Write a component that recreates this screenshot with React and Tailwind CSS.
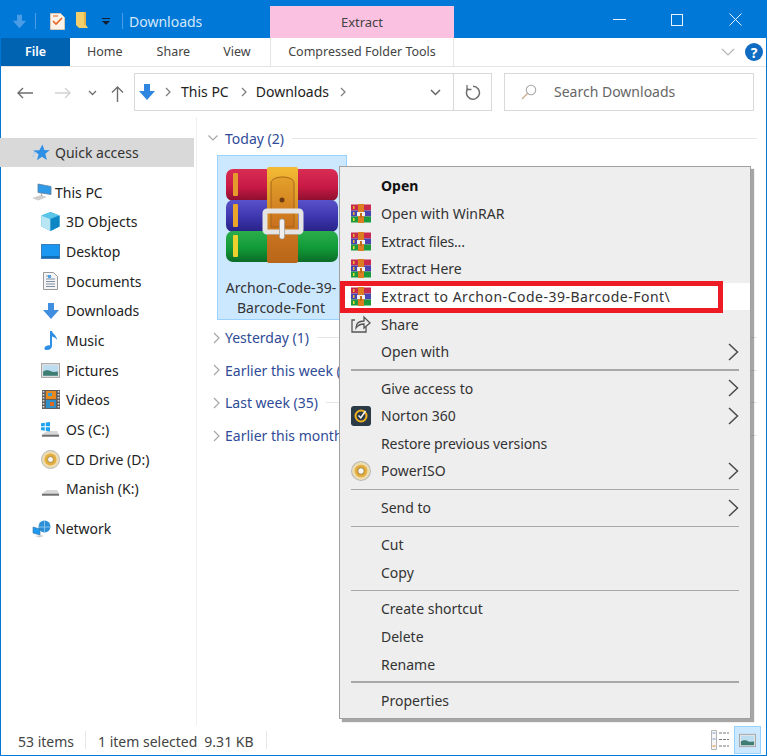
import React from "react";

const Chev = ({ className = "", d = "M1 1l4 4-4 4", w = 6, h = 10, vb = "0 0 6 10", stroke = "#808080", sw = 1.3 }) => (
  <svg width={w} height={h} viewBox={vb} fill="none" className={className}><path d={d} stroke={stroke} strokeWidth={sw} /></svg>
);

const BlueArrow = ({ size = 18, fill = "#3f8ee0" }) => (
  <svg width={size} height={size} viewBox="0 0 18 18"><path d="M6 1h6v7h5l-8 9-8-9h5z" fill={fill} /></svg>
);

const Star = () => (
  <svg width="18" height="18" viewBox="0 0 18 18"><path d="M10.5 0.5l1.8 5.5 5.4.3-4.4 3.5 1.6 6.2-5-3.3-5 3.6 1.7-6L1 6.6l6.3-.3z" fill="#2f8fe6" /><path d="M1 9h4M0 12h3" stroke="#a9cdf0" strokeWidth="1" /></svg>
);
const PC = () => (
  <svg width="20" height="18" viewBox="0 0 20 18"><path d="M6 1l13 2.500v8L6 9.500z" fill="#2f9ae8" stroke="#5b7f9f" strokeWidth=".8" /><path d="M0 15l9-3 6 2-9 3.500z" fill="#cfcfcf" /><path d="M9 10l1 3" stroke="#aaa" /></svg>
);
const Cube = () => (
  <svg width="19" height="19" viewBox="0 0 19 19"><path d="M9.5 0l9 3.5v11l-9 4.5-9-4.5v-11z" fill="#27a6dc" /><path d="M.5 3.5l9 3.5v12l-9-4.5z" fill="#b9e6f5" /><path d="M9.5 0l9 3.5-9 3.5-9-3.5z" fill="#5cc5ea" /><path d="M9.5 7v12l9-4.5v-11z" fill="#0f86c4" /></svg>
);
const Desk = () => (
  <svg width="19" height="16" viewBox="0 0 19 16"><rect x=".5" y=".5" width="18" height="14" fill="#1a97f0" stroke="#3a7db8" /><rect x="1" y="12" width="17" height="2" fill="#0f6fb8" /></svg>
);
const Doc = () => (
  <svg width="15" height="18" viewBox="0 0 15 18"><path d="M.5.5h10l4 4v13H.5z" fill="#f4f4f4" stroke="#9a9a9a" /><path d="M3 4h5M3 7h9M3 9.5h9M3 12h9M3 14.5h9" stroke="#7f8fa5" strokeWidth="1" /><path d="M5 3h3v3H5z" fill="#4ea1e6" /></svg>
);
const Note = () => (
  <svg width="14" height="19" viewBox="0 0 14 19"><path d="M6 0h2c.3 3 5 4 5 9-1-2-3-3-5-3.500V15c0 2-2 4-5 4s-3-2-2-3 3-2 5-1.500z" fill="#2f8fe6" /></svg>
);
const Pics = ({ w = 19, h = 15 }) => (
  <svg width={w} height={h} viewBox="0 0 18 14"><rect x=".5" y=".5" width="17" height="13" fill="#e8e8e8" stroke="#a5a5a5" /><rect x="2" y="2" width="14" height="10" fill="#bcdcf0" /><path d="M2 8c3-2 6-1 8 0s4 0 6 0v4H2z" fill="#3f7c72" /></svg>
);
const Film = () => (
  <svg width="18" height="19" viewBox="0 0 18 19"><rect width="18" height="19" fill="#5f5f5f" /><path d="M1.500 1v17M16.500 1v17" stroke="#d9d9d9" strokeWidth="1.600" strokeDasharray="1.500 1.500" /><rect x="4" y="1" width="10" height="8" fill="#e8891d" /><rect x="4" y="10" width="10" height="8" fill="#2f8fc9" /><rect x="6" y="3" width="4" height="3" fill="#3a9fd6" /><rect x="8" y="12" width="4" height="4" fill="#e06a1f" /></svg>
);
const Drive = ({ win }) => (
  <svg width="20" height="18" viewBox="0 0 20 18">
    <path d="M1 14l5-4h11l2 4v2H1z" fill="#d8d8d8" /><path d="M1 14h18v2H1z" fill="#6f6f6f" />
    {win && <path d="M0 2l4-.7V5H0zM5 1.200L9.500.5v4.500H5zM0 6h4v3.700L0 9zM5 6h4.500v4.500L5 9.800z" fill="#1fa2ee" />}
  </svg>
);
const Disc = ({ size = 19 }) => (
  <svg width={size} height={size} viewBox="0 0 19 19"><circle cx="9.500" cy="9.500" r="9" fill="#ecdcb0" stroke="#b9b9b9" /><circle cx="9.500" cy="9.500" r="6" fill="#e4ad3c" /><circle cx="9.500" cy="9.500" r="3" fill="#f6f6f6" stroke="#a88b45" /></svg>
);
const Net = () => (
  <svg width="20" height="18" viewBox="0 0 20 18"><circle cx="12.500" cy="6.500" r="6" fill="#2f8fd6" /><path d="M7 7h12M12.500 1v11" stroke="#9ad0f2" strokeWidth=".8" /><path d="M1 7l7 2v6l-7-2z" fill="#1d9bf0" stroke="#3d6f9a" strokeWidth=".6" /><path d="M3 16l6-1 3 1-5 1.500z" fill="#cfcfcf" /></svg>
);

const SmallRar = () => (
  <svg width="20" height="19" viewBox="0 0 20 19">
    <rect y=".5" width="20" height="6" fill="#c9294d" /><rect y="6.500" width="20" height="6" fill="#4a44b0" /><rect y="12.500" width="20" height="6" fill="#1c9a3c" />
    <rect x="7" width="6" height="19" fill="#dd7d22" /><rect x="6" y="8" width="8" height="4" fill="#f0f0f0" /><rect x="9" y="9" width="2" height="5" fill="#c06a1c" />
    <rect x="2" y="2" width="1.500" height="3" fill="#e9b52d" /><rect x="2" y="8" width="1.500" height="3" fill="#e9b52d" /><rect x="2" y="14" width="1.500" height="3" fill="#e9e02d" />
  </svg>
);

const ShareIco = () => (
  <svg width="20" height="18" viewBox="0 0 20 18" fill="none" stroke="#555" strokeWidth="1.300"><path d="M4 5H1v12h14v-5" /><path d="M5 13c0-5 3-7 8-7V2l6 6-6 5V9c-4 0-6 1-8 4z" fill="#eee" /></svg>
);
const Norton = () => (
  <svg width="20" height="20" viewBox="0 0 20 20"><rect width="20" height="20" rx="3" fill="#2b3a47" /><circle cx="10" cy="10" r="5.500" fill="none" stroke="#f1b21f" strokeWidth="2" /><path d="M7.500 9.500l2.300 2.300L14.500 5" fill="none" stroke="#f5f5f5" strokeWidth="1.500" /></svg>
);

const BigRar = () => (
  <svg width="112" height="96" viewBox="0 0 112 96">
    <defs>
      <linearGradient id="rr" x1="0" y1="0" x2="0" y2="1"><stop offset="0" stopColor="#d92d55" /><stop offset=".55" stopColor="#c81a45" /><stop offset="1" stopColor="#8c0f2e" /></linearGradient>
      <linearGradient id="bb" x1="0" y1="0" x2="0" y2="1"><stop offset="0" stopColor="#5a52c9" /><stop offset=".55" stopColor="#3c35ad" /><stop offset="1" stopColor="#272285" /></linearGradient>
      <linearGradient id="gg" x1="0" y1="0" x2="0" y2="1"><stop offset="0" stopColor="#2bae4b" /><stop offset=".55" stopColor="#119a38" /><stop offset="1" stopColor="#0b6c27" /></linearGradient>
      <linearGradient id="bt" x1="0" y1="0" x2="0" y2="1"><stop offset="0" stopColor="#f3bb35" /><stop offset=".35" stopColor="#dd9a27" /><stop offset=".7" stopColor="#c9741f" /><stop offset="1" stopColor="#b8651a" /></linearGradient>
      <linearGradient id="tg" x1="0" y1="0" x2="0" y2="1"><stop offset="0" stopColor="#e3a02a" /><stop offset="1" stopColor="#c9701e" /></linearGradient>
    </defs>
    <rect x="0" y="2" width="112" height="32" rx="7" fill="url(#rr)" />
    <rect x="0" y="33" width="112" height="32" rx="7" fill="url(#bb)" />
    <rect x="0" y="64" width="112" height="31" rx="7" fill="url(#gg)" />
    <rect x="7" y="6" width="5" height="23" rx="1" fill="#e49a2c" />
    <rect x="7" y="37" width="5" height="23" rx="1" fill="#e9a62a" />
    <rect x="7" y="68" width="5" height="22" rx="1" fill="#ecd02e" />
    <rect x="41" y="0" width="31" height="96" rx="2" fill="url(#bt)" />
    <path d="M45 60V16c0-8 23-8 23 0v44z" fill="url(#tg)" stroke="#a8631a" strokeWidth="1" />
    <rect x="41" y="66" width="31" height="2" fill="#9c5614" />
    <circle cx="56" cy="33" r="2.500" fill="#6e3c10" />
    <rect x="39" y="44" width="36" height="21" rx="2" fill="none" stroke="#e4e4e4" strokeWidth="5" />
    <rect x="53.500" y="52" width="5" height="20" rx="2" fill="#f0f0f0" stroke="#999" strokeWidth=".7" />
  </svg>
);

const SideRow = ({ icon, label, child }) => (
  <div className={`flex h-[29.67px] items-center ${child ? "pl-[41px]" : "pl-[32px]"}`}>
    <span className={`flex shrink-0 items-center justify-center ${child ? "mr-[6px] w-[19px]" : "mr-[3px] w-[20px]"}`}>{icon}</span>
    <span>{label}</span>
  </div>
);

const Group = ({ label, mt = "", open }) => (
  <div className={`flex h-5 items-center pr-[9px] text-[#2f4b97] ${mt}`}>
    {open ? (
      <Chev className="ml-[11px] mr-[7px] shrink-0" w={10} h={6} vb="0 0 10 6" d="M.500.500L5 5l4.500-4.500" stroke="#a6a6a6" sw={1.200} />
    ) : (
      <Chev className="ml-[16px] mr-[5px] shrink-0" w={7} h={12} vb="0 0 7 12" d="M1 1l5 5-5 5" stroke="#a6a6a6" sw={1.200} />
    )}
    <span className="shrink-0">{label}</span>
    <span className="ml-2 h-px flex-1 bg-[#e6e6e6]" />
  </div>
);

const Item = ({ icon, label, arrow, bold, children, white, labelClass = "" }) => (
  <div className={`relative flex h-[27.67px] items-center pl-[11px] pr-[11px] ${white ? "bg-white" : ""} ${bold ? "font-bold text-[#111]" : "text-[#333]"}`}>
    <span className="flex w-[20px] shrink-0 items-center justify-center">{icon}</span>
    <span className={`ml-[10px] flex-1 whitespace-nowrap ${labelClass}`}>{label}</span>
    {arrow && (
      <svg width="11" height="18" viewBox="0 0 11 18" fill="none"><path d="M1 1l8.500 8L1 17" stroke="#4a4a4a" strokeWidth="1.500" /></svg>
    )}
    {children}
  </div>
);
const Sep = ({ tall }) => (
  <div className={`flex items-center px-[11px] ${tall ? "h-[9.300px]" : "h-[8.600px]"}`}><div className="h-[1.500px] w-full bg-[#a8a8a8]" /></div>
);

export default function App() {
  return (
    <div className="relative h-[756px] w-[768px] overflow-hidden bg-white font-['Noto_Sans',sans-serif] text-[14px] text-[#333]">
      <div className="flex h-full w-[767px] flex-col border-x border-b border-[#0078d7]">
        {/* title bar */}
        <div className="flex h-[38px] shrink-0 items-center bg-[#0078d7] pl-[11px] pt-[4px]">
          <BlueArrow size={15} fill="#4a9ce6" />
          <span className="ml-[8px] h-[16px] w-px bg-[#4a9ce6]" />
          <svg className="ml-[14px]" width="15" height="17" viewBox="0 0 15 17"><path d="M.5.5h10l4 4v12H.5z" fill="#fbf3ea" stroke="#d9c9b5" /><path d="M3 8l3 3 6-6" fill="none" stroke="#e8641f" strokeWidth="1.600" /><path d="M3 3h5" stroke="#e8641f" /></svg>
          <svg className="ml-[11px]" width="13" height="18" viewBox="0 0 13 18"><path d="M0 0h10v13l2 3H3l-3-3z" fill="#f2cf6b" /><path d="M8 0h2v13H8z" fill="#e3b347" /></svg>
          <svg className="ml-[13px]" width="8" height="7" viewBox="0 0 8 7"><path d="M0 0h8v1H0zM0 3h8L4 7z" fill="#10202e" /></svg>
          <span className="ml-[12px] h-[16px] w-px bg-[#4a9ce6]" />
          <span className="ml-[6px] w-[141px] text-[14px] text-[#d3e8fa]">Downloads</span>
          <div className="flex h-[32px] w-[184px] items-center justify-center self-end bg-[#fbc1e0] pt-[2px] text-[13px] text-[#444]">Extract</div>
          <div className="-mt-[3px] ml-[159px] flex items-center">
            <span className="h-px w-[13px] bg-[#e8f3fc]" />
            <span className="ml-[45px] h-[12px] w-[12px] border border-[#e8f3fc]" />
            <svg className="ml-[46px]" width="13" height="13" viewBox="0 0 13 13"><path d="M.5.5l12 12M12.500.5l-12 12" stroke="#e8f3fc" strokeWidth="1" /></svg>
          </div>
        </div>
        {/* ribbon tabs */}
        <div className="flex h-[29px] shrink-0 items-stretch border-b border-[#e5e5e5] text-[12.500px] text-[#444]">
          <div className="flex w-[69px] items-center justify-center bg-[#0063b1] font-semibold text-white">File</div>
          <div className="flex w-[200px] items-center">
            <span className="ml-[17px]">Home</span>
            <span className="ml-[34px]">Share</span>
            <span className="ml-[33px]">View</span>
          </div>
          <div className="flex w-[184px] items-center justify-center border-x border-[#e5e5e5]">Compressed Folder Tools</div>
          <div className="flex flex-1 items-center justify-end pr-[3px]">
            <svg width="14" height="8" viewBox="0 0 14 8" fill="none"><path d="M1 1l6 6 6-6" stroke="#b5b5b5" strokeWidth="1.200" /></svg>
            <span className="ml-[10px] flex h-[18px] w-[18px] items-center justify-center rounded-full bg-[#0f6cc2] text-[14px] font-bold text-white">?</span>
          </div>
        </div>
        {/* nav */}
        <div className="flex h-[50px] shrink-0 items-center py-[1px]">
          <div className="flex w-[133px] items-center pt-px">
            <svg className="ml-[16px]" width="16" height="12" viewBox="0 0 16 12" fill="none"><path d="M16 6H1M6 1L1 6l5 5" stroke="#6e6e6e" strokeWidth="1.400" /></svg>
            <svg className="ml-[22px]" width="16" height="12" viewBox="0 0 16 12" fill="none"><path d="M0 6h15M10 1l5 5-5 5" stroke="#d2d2d2" strokeWidth="1.400" /></svg>
            <svg className="ml-[17px]" width="9" height="6" viewBox="0 0 9 6" fill="none"><path d="M1 1l3.500 3.500L8 1" stroke="#6e6e6e" strokeWidth="1.300" /></svg>
            <svg className="ml-[14px] mt-[2px]" width="13" height="16" viewBox="0 0 13 16" fill="none"><path d="M6.500 16V1M1 6.500L6.500 1 12 6.500" stroke="#6e6e6e" strokeWidth="1.400" /></svg>
          </div>
          <div className="flex h-[38px] w-[358px] items-center border border-[#d9d9d9] pl-[3px]">
            <BlueArrow size={18} fill="#2f86e0" />
            <Chev className="ml-[9px]" />
            <span className="-mt-[2px] ml-[10px] text-[14px] text-[#222]">This PC</span>
            <Chev className="ml-[12px]" />
            <span className="-mt-[2px] ml-[9px] text-[14px] text-[#222]">Downloads</span>
            <Chev className="ml-[11px]" />
            <div className="ml-auto flex h-full items-center">
              <svg className="mr-[12px]" width="11" height="7" viewBox="0 0 11 7" fill="none"><path d="M1 1l4.500 4.500L10 1" stroke="#666" strokeWidth="1.500" /></svg>
              <div className="flex h-full w-[38px] items-center justify-center border-l border-[#d9d9d9]">
                <svg width="16" height="16" viewBox="0 0 16 16" fill="none"><path d="M3 4.500A6.500 6.500 0 1 0 8 2.200" stroke="#6e6e6e" strokeWidth="1.500" /><path d="M2 1v4.500h4.500" stroke="#6e6e6e" strokeWidth="1.300" /></svg>
              </div>
            </div>
          </div>
          <div className="ml-[12px] flex h-[38px] w-[250px] items-center border border-[#d9d9d9] pb-[1px] pl-[16px] text-[#666]">
            <svg width="16" height="16" viewBox="0 0 16 16" fill="none"><circle cx="10" cy="6" r="4.700" stroke="#a8a8a8" strokeWidth="1.100" /><path d="M6.500 9.500L1 15" stroke="#c9a98a" strokeWidth="1.300" /></svg>
            <span className="ml-[17px] text-[14px]">Search Downloads</span>
          </div>
        </div>
        {/* main */}
        <div className="flex min-h-0 flex-1">
          <nav className="w-[196px] shrink-0 border-r border-[#f0f0f0] pt-[21px] text-[#222]">
            <div className="-ml-px flex h-[29px] w-[194px] items-center bg-[#d9d9d9] pl-[31px]">
              <span className="mr-[4px] flex w-[20px] justify-center"><Star /></span>
              <span className="text-[#333]">Quick access</span>
            </div>
            <div className="-ml-px mt-[10.500px]">
              <SideRow icon={<PC />} label="This PC" />
              <SideRow child icon={<Cube />} label="3D Objects" />
              <SideRow child icon={<Desk />} label="Desktop" />
              <SideRow child icon={<Doc />} label="Documents" />
              <SideRow child icon={<BlueArrow size={18} />} label="Downloads" />
              <SideRow child icon={<Note />} label="Music" />
              <SideRow child icon={<Pics />} label="Pictures" />
              <SideRow child icon={<Film />} label="Videos" />
              <SideRow child icon={<Drive win />} label="OS (C:)" />
              <SideRow child icon={<Disc />} label="CD Drive (D:)" />
              <SideRow child icon={<Drive />} label="Manish (K:)" />
            </div>
            <div className="-ml-px mt-[10px]">
              <SideRow icon={<Net />} label="Network" />
            </div>
          </nav>
          <main className="flex-1 pt-[11px]">
            <Group label="Today (2)" open />
            <div className="ml-[20px] mt-[7px] flex h-[165px] w-[130px] flex-col items-center border border-[#99d1ff] bg-[#cce8ff] pt-[11px] text-center leading-[20px]">
              <BigRar />
              <div className="mt-[15px] w-[126px] -translate-x-px">Archon-Code-39-<br />Barcode-Font</div>
            </div>
            <Group label="Yesterday (1)" mt="mt-[7.500px]" />
            <Group label="Earlier this week (6)" mt="mt-[12.700px]" />
            <Group label="Last week (35)" mt="mt-[12.700px]" />
            <Group label="Earlier this month (7)" mt="mt-[12.700px]" />
          </main>
        </div>
        {/* status */}
        <div className="flex h-[30px] shrink-0 items-center text-[14px] text-[#444]">
          <span className="ml-[17px] pt-[3px]">53 items</span>
          <span className="ml-[11px] h-[18px] w-px bg-[#e8e8e8]" />
          <span className="ml-[12px] pt-[3px]">1 item selected</span>
          <span className="ml-[7px] pt-[3px]">9.31 KB</span>
          <span className="ml-[12px] h-[18px] w-px bg-[#e8e8e8]" />
          <div className="ml-auto flex items-center pr-[5px]">
            <svg width="19" height="20" viewBox="0 0 19 20" fill="none"><path d="M.5.500h5v19h-5z" fill="#f6f6f6" stroke="#b5b5b5" /><path d="M1.500 3h3M1.500 9h3" stroke="#7a9cc0" /><path d="M1.500 16h3" stroke="#e08a2c" /><path d="M8 3h10M8 9.500h10M8 16h10" stroke="#777" strokeDasharray="3 1" /></svg>
            <span className="ml-[4px] flex h-[28px] w-[27px] items-center justify-center border border-[#99d1ff] bg-[#cce8ff]"><Pics w={17} h={15} /></span>
          </div>
        </div>
      </div>

      {/* context menu */}
      <div className="absolute left-[339px] top-[166px] w-[412px] border border-[#a0a0a0] bg-[#eeeeee] pb-[4px] pt-[5px] shadow-[3px_3px_1px_rgba(0,0,0,0.35)]">
        <Item label="Open" bold />
        <Item icon={<SmallRar />} label="Open with WinRAR" />
        <Item icon={<SmallRar />} label="Extract files..." labelClass="tracking-[-0.2px]" />
        <Item icon={<SmallRar />} label="Extract Here" />
        <Item icon={<SmallRar />} label="Extract to Archon-Code-39-Barcode-Font\" labelClass="tracking-[0.5px]" white>
          <span className="absolute -top-[2px] left-0 h-[32px] w-[383px] border-[5px] border-[#ed1c24]" />
        </Item>
        <Item icon={<ShareIco />} label="Share" />
        <Item label="Open with" arrow />
        <Sep />
        <Item label="Give access to" arrow />
        <Item icon={<Norton />} label="Norton 360" arrow />
        <Item label="Restore previous versions" labelClass="tracking-[-0.1px]" />
        <Item icon={<Disc size={20} />} label="PowerISO" arrow />
        <Sep tall />
        <Item label="Send to" arrow />
        <Sep tall />
        <Item label="Cut" />
        <Item label="Copy" />
        <Sep />
        <Item label="Create shortcut" />
        <Item label="Delete" />
        <Item label="Rename" />
        <Sep />
        <Item label="Properties" />
      </div>
    </div>
  );
}
